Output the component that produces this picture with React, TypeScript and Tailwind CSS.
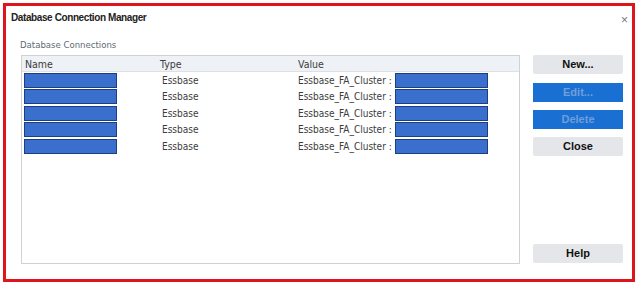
import React from 'react';

const rows = [0, 1, 2, 3, 4];

const GrayButton: React.FC<{ label: string }> = ({ label }) => (
  <button className="h-[19px] w-[90px] rounded-[2px] bg-[#e4e6e9] text-[11px] font-bold text-[#111] leading-none">
    {label}
  </button>
);

const BlueButton: React.FC<{ label: string }> = ({ label }) => (
  <button className="h-[19px] w-[90px] bg-[#1a70d2] text-[11px] font-bold text-[#6f9edb] leading-none">
    {label}
  </button>
);

const App: React.FC = () => {
  return (
    <div className="w-[640px] h-[289px] bg-white pt-[3px] pl-[3px] font-['Liberation_Sans',sans-serif]">
      <div className="w-[632px] h-[279px] border-[3px] border-[#e0141c] flex flex-col relative">
        <span className="absolute right-[4px] top-[8px] text-[12px] leading-none text-[#777]">×</span>

        <div className="pl-[5px] mt-[4px] text-[10px] font-bold tracking-[-0.4px] text-[#222] leading-[16px]">
          Database Connection Manager
        </div>

        <div className="pl-[14px] mt-[12px] text-[9.5px] text-[#5f6a74] leading-[14px] font-['DejaVu_Sans_Condensed','Liberation_Sans',sans-serif]">
          Database Connections
        </div>

        <div className="flex mt-[3px] pl-[15px]">
          {/* table */}
          <div className="w-[499px] h-[209px] border border-[#cfd2d6] bg-white text-[10px] text-[#3c3c3c] font-['DejaVu_Sans_Condensed','Liberation_Sans',sans-serif]">
            <div className="flex h-[16px] bg-[#eef1f5] border-b border-[#dde1e6] leading-[16px] text-[10.5px]">
              <div className="w-[136px] pl-[3px]">Name</div>
              <div className="w-[137px] pl-[2px]">Type</div>
              <div className="flex-1 pl-[3px]">Value</div>
            </div>
            {rows.map((r) => (
              <div key={r} className="flex h-[16.5px] items-center">
                <div className="w-[136px] pl-[2px]">
                  <div className="w-[93px] h-[15px] bg-[#3b6fcd] border border-[#1d3f7e]" />
                </div>
                <div className="w-[137px] pl-[4px]">Essbase</div>
                <div className="flex-1 flex items-center pl-[3px]">
                  <span>Essbase_FA_Cluster :</span>
                  <div className="ml-[3px] w-[93px] h-[15px] bg-[#3b6fcd] border border-[#1d3f7e]" />
                </div>
              </div>
            ))}
          </div>

          {/* buttons */}
          <div className="ml-[13px] flex flex-col">
            <GrayButton label="New..." />
            <div className="mt-[9px] flex flex-col gap-[8px]">
              <BlueButton label="Edit..." />
              <BlueButton label="Delete" />
              <GrayButton label="Close" />
            </div>
            <div className="mt-auto">
              <GrayButton label="Help" />
            </div>
          </div>
        </div>
      </div>
    </div>
  );
};

export default App;
